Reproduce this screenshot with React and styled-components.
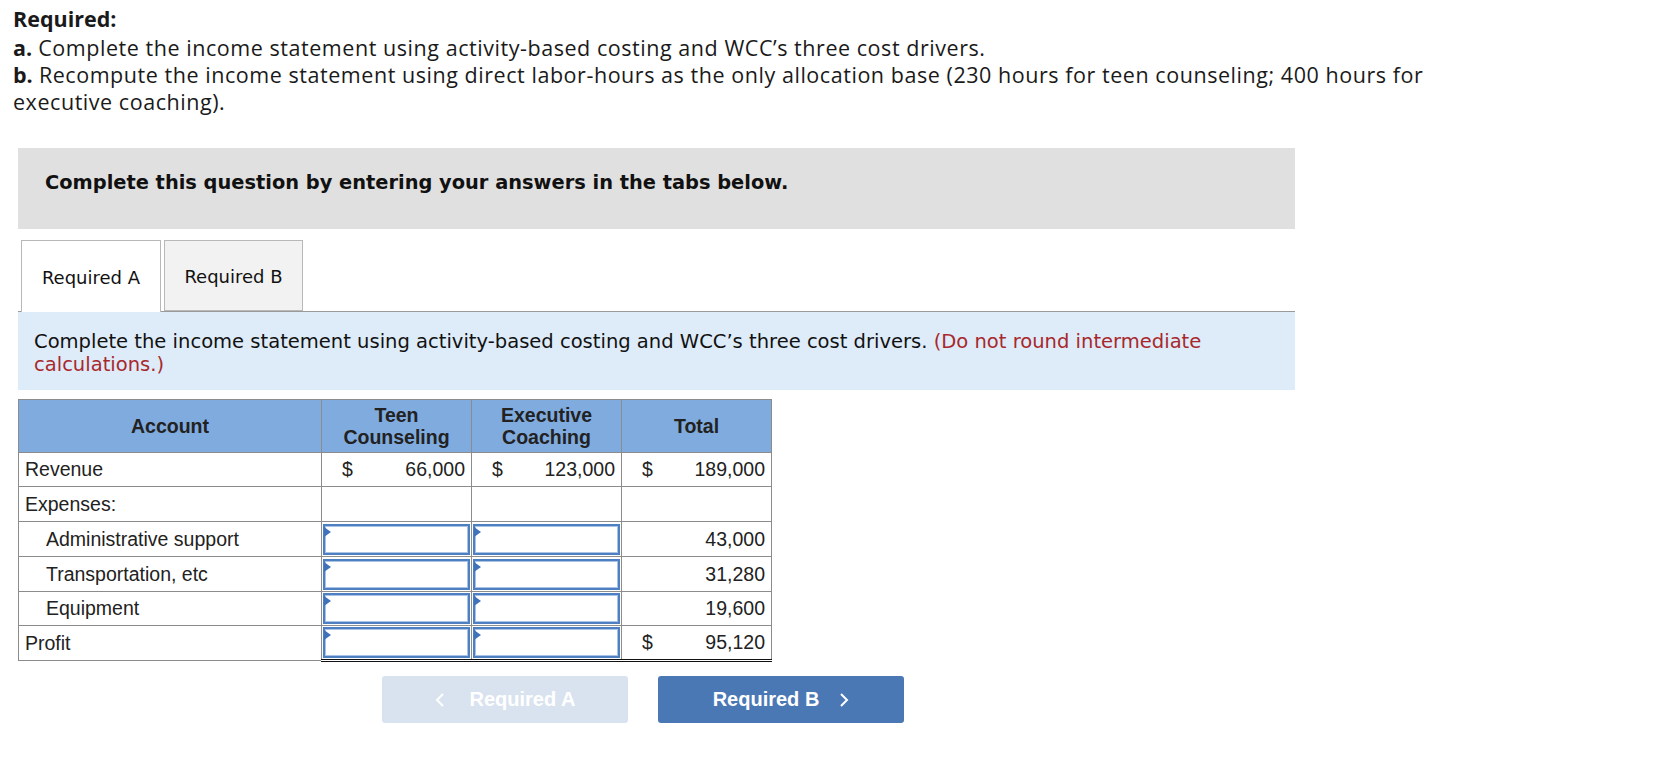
import React from "react";
import styled, { createGlobalStyle } from "styled-components";

const Global = createGlobalStyle`
  html, body { margin: 0; padding: 0; background: #ffffff; }
  body { font-family: "Open Sans", "Liberation Sans", sans-serif; color: #222; }
  * { box-sizing: border-box; }
`;

const Page = styled.div`
  width: 1660px;
  height: 776px;
  padding: 5px 0 0 13px;
  overflow: hidden;
`;

const Intro = styled.div`
  font-family: "Open Sans", "Liberation Sans", sans-serif;
  font-size: 21.5px;
  letter-spacing: 0.55px;
  line-height: 27px;
  color: #1a1a1a;
  width: 1500px;
`;

const IntroTitle = styled.div`
  font-weight: 700;
  letter-spacing: 0;
  margin-bottom: 2px;
`;

const IntroLine = styled.div``;

const Lead = styled.b`
  font-weight: 700;
  letter-spacing: 0;
`;

const Panel = styled.div`
  margin-left: 5px;
  margin-top: 33px;
  width: 1277px;
`;

const Banner = styled.div`
  height: 81px;
  background: #e0e0e0;
  padding: 23px 25px 0 27px;
  font-family: "DejaVu Sans", Verdana, sans-serif;
  font-weight: 700;
  font-size: 19.4px;
  line-height: 24px;
  color: #111;
`;

const TabBar = styled.div`
  margin-top: 11px;
  display: flex;
  gap: 3px;
  padding-left: 3px;
  border-bottom: 1px solid #9a9a9a;
  height: 72px;
`;

const Tab = styled.div`
  width: ${(p) => (p.$active ? "140px" : "139px")};
  height: ${(p) => (p.$active ? "72px" : "71px")};
  border: 1px solid #b8b8b8;
  border-bottom: ${(p) => (p.$active ? "none" : "1px solid #b8b8b8")};
  background: ${(p) => (p.$active ? "#ffffff" : "#f2f2f2")};
  margin-bottom: ${(p) => (p.$active ? "-1px" : "0")};
  display: flex;
  align-items: center;
  justify-content: center;
  padding-top: 2px;
  font-family: "DejaVu Sans", Verdana, sans-serif;
  font-size: 18px;
  color: #111;
`;

const Instruction = styled.div`
  background: #deebf8;
  padding: 18px 16px 14px 16px;
  height: 78px;
  font-family: "DejaVu Sans", Verdana, sans-serif;
  font-size: 19.55px;
  line-height: 23px;
  color: #111;
`;

const Hint = styled.span`
  color: #a8272c;
`;

const Table = styled.table`
  margin-top: 9px;
  border-collapse: collapse;
  width: 753px;
  table-layout: fixed;
  font-family: "Liberation Sans", Arial, sans-serif;
  font-size: 19.5px;
  color: #222;
`;

const HeadCell = styled.th`
  background: #80abdf;
  border: 1px solid #8c8c8c;
  font-weight: 700;
  height: 53px;
  line-height: 22px;
  text-align: center;
  vertical-align: middle;
  padding: 0 4px;
  width: ${(p) => p.$w}px;
`;

const LabelCell = styled.td`
  border: 1px solid #8c8c8c;
  height: ${(p) => p.$h || 35}px;
  padding: 0 0 0 ${(p) => (p.$indent ? 27 : 6)}px;
  vertical-align: middle;
  white-space: nowrap;
`;

const DataCell = styled.td`
  border: 1px solid #8c8c8c;
  border-top: ${(p) => (p.$rule ? "1px solid #111" : "1px solid #8c8c8c")};
  border-bottom: ${(p) => (p.$double ? "3px double #111" : "1px solid #8c8c8c")};
  height: ${(p) => p.$h || 35}px;
  padding: ${(p) => (p.$input ? "1px" : "0 6px 0 20px")};
  vertical-align: middle;
`;

const Amount = styled.div`
  display: flex;
  justify-content: ${(p) => (p.$dollar ? "space-between" : "flex-end")};
  align-items: center;
`;

const InputBox = styled.div`
  position: relative;
  height: 31px;
  border: 2px solid #4d7fc1;
  box-shadow: inset 0 0 0 1px #a9c3e6;
  background: #fff;
`;

const Flag = styled.span`
  position: absolute;
  left: -1px;
  top: 1px;
  width: 0;
  height: 0;
  border-top: 5px solid transparent;
  border-bottom: 5px solid transparent;
  border-left: 7px solid #3f72b8;
`;

const NavRow = styled.div`
  display: flex;
  gap: 30px;
  margin: 14px 0 0 369px;
`;

const NavButton = styled.div`
  width: 246px;
  height: 47px;
  border-radius: 3px;
  background: ${(p) => (p.$disabled ? "#d9e3ef" : "#4a78b5")};
  color: #ffffff;
  font-family: "Liberation Sans", Arial, sans-serif;
  font-weight: 700;
  font-size: 20px;
  display: flex;
  align-items: center;
  justify-content: center;
  gap: ${(p) => (p.$disabled ? "25px" : "20px")};
`;

const Chevron = ({ dir }) => (
  <svg width="10" height="16" viewBox="0 0 10 16" fill="none">
    <polyline
      points={dir === "left" ? "8,2 2,8 8,14" : "2,2 8,8 2,14"}
      stroke="#ffffff"
      strokeWidth="2"
      strokeLinejoin="miter"
    />
  </svg>
);

const Cell = ({ value, dollar }) => (
  <Amount $dollar={dollar}>
    {dollar && <span>$</span>}
    <span>{value}</span>
  </Amount>
);

const InputCell = ({ rule, double, h }) => (
  <DataCell $input $rule={rule} $double={double} $h={h}>
    <InputBox>
      <Flag />
    </InputBox>
  </DataCell>
);

export default function App() {
  return (
    <>
      <Global />
      <Page>
        <Intro>
          <IntroTitle>Required:</IntroTitle>
          <IntroLine>
            <Lead>a.</Lead> Complete the income statement using activity-based costing and WCC’s three cost drivers.
          </IntroLine>
          <IntroLine>
            <Lead>b.</Lead> Recompute the income statement using direct labor-hours as the only allocation base (230 hours for teen counseling; 400 hours for
          </IntroLine>
          <IntroLine>executive coaching).</IntroLine>
        </Intro>
        <Panel>
          <Banner>Complete this question by entering your answers in the tabs below.</Banner>
          <TabBar>
            <Tab $active>Required A</Tab>
            <Tab>Required B</Tab>
          </TabBar>
          <Instruction>
            Complete the income statement using activity-based costing and WCC’s three cost drivers.{" "}
            <Hint>(Do not round intermediate calculations.)</Hint>
          </Instruction>
          <Table>
            <thead>
              <tr>
                <HeadCell $w={303}>Account</HeadCell>
                <HeadCell $w={150}>
                  Teen
                  <br />
                  Counseling
                </HeadCell>
                <HeadCell $w={150}>
                  Executive
                  <br />
                  Coaching
                </HeadCell>
                <HeadCell $w={150}>Total</HeadCell>
              </tr>
            </thead>
            <tbody>
              <tr>
                <LabelCell $h={34}>Revenue</LabelCell>
                <DataCell $h={34}>
                  <Cell dollar value="66,000" />
                </DataCell>
                <DataCell $h={34}>
                  <Cell dollar value="123,000" />
                </DataCell>
                <DataCell $h={34}>
                  <Cell dollar value="189,000" />
                </DataCell>
              </tr>
              <tr>
                <LabelCell>Expenses:</LabelCell>
                <DataCell />
                <DataCell />
                <DataCell />
              </tr>
              <tr>
                <LabelCell $indent>Administrative support</LabelCell>
                <InputCell />
                <InputCell />
                <DataCell>
                  <Cell value="43,000" />
                </DataCell>
              </tr>
              <tr>
                <LabelCell $indent>Transportation, etc</LabelCell>
                <InputCell />
                <InputCell />
                <DataCell>
                  <Cell value="31,280" />
                </DataCell>
              </tr>
              <tr>
                <LabelCell $indent $h={34}>Equipment</LabelCell>
                <InputCell h={34} />
                <InputCell h={34} />
                <DataCell $h={34}>
                  <Cell value="19,600" />
                </DataCell>
              </tr>
              <tr>
                <LabelCell $h={34}>Profit</LabelCell>
                <InputCell rule double h={34} />
                <InputCell rule double h={34} />
                <DataCell $rule $double $h={34}>
                  <Cell dollar value="95,120" />
                </DataCell>
              </tr>
            </tbody>
          </Table>
        </Panel>
        <NavRow>
          <NavButton $disabled>
            <Chevron dir="left" />
            <span>Required A</span>
          </NavButton>
          <NavButton>
            <span>Required B</span>
            <Chevron dir="right" />
          </NavButton>
        </NavRow>
      </Page>
    </>
  );
}
